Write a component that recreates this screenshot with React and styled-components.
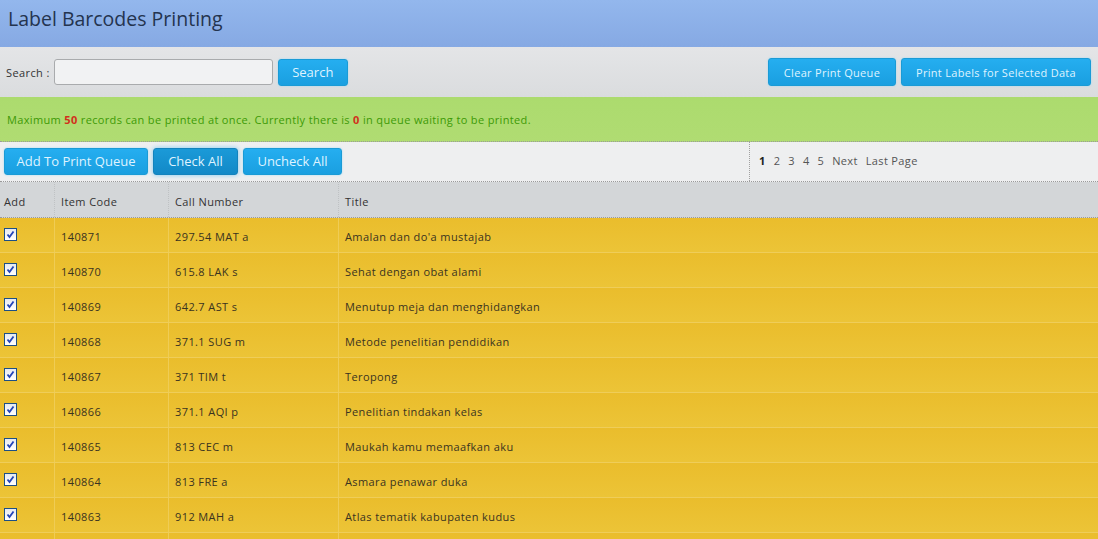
import React from "react";
import styled, { createGlobalStyle } from "styled-components";

const GlobalStyle = createGlobalStyle`
  body {
    margin: 0;
    background: #ebc02f;
    font-family: "Open Sans", "DejaVu Sans", sans-serif;
    overflow: hidden;
  }
`;

const Page = styled.div`
  width: 1098px;
  height: 539px;
  overflow: hidden;
`;

const Header = styled.div`
  height: 47px;
  background: linear-gradient(#93b7ed, #86a9e3);
  display: flex;
  align-items: center;
  padding-left: 8px;
  padding-bottom: 11px;
  box-sizing: border-box;
`;

const Title = styled.h1`
  margin: 0;
  font-size: 19.5px;
  font-weight: 400;
  color: #24344f;
`;

const SearchBar = styled.div`
  height: 50px;
  background: linear-gradient(#e4e5e7, #dadcde);
  display: flex;
  align-items: center;
  padding: 0 6px;
  box-sizing: border-box;
`;

const Label = styled.span`
  font-size: 11px;
  letter-spacing: 0.4px;
  color: #333;
  margin-right: 4px;
`;

const Input = styled.input`
  width: 219px;
  height: 26px;
  box-sizing: border-box;
  border: 1px solid #a9abad;
  border-radius: 3px;
  background: #f1f2f3;
`;

const Button = styled.button`
  height: ${(p) => p.h || 27}px;
  width: ${(p) => p.w}px;
  margin-left: ${(p) => p.ml || 0}px;
  border: 1px solid ${(p) => (p.active ? "#1383bd" : "#1a9bd6")};
  border-radius: 3px;
  background: ${(p) =>
    p.active
      ? "linear-gradient(#1b9ad8, #1289c7)"
      : "linear-gradient(#25aef0, #1a9fe0)"};
  box-shadow: ${(p) =>
    p.active ? "0 0 5px #7fc8f0" : "0 0 2px #9ad8f5"};
  color: #dff3ff;
  font-family: "Open Sans", sans-serif;
  font-size: ${(p) => p.fs || 13}px;
  letter-spacing: ${(p) => (p.fs ? 0.3 : 0)}px;
  padding: 0;
  cursor: pointer;
`;

const Right = styled.div`
  margin-left: auto;
  display: flex;
  gap: 5px;
  margin-right: 1px;
`;

const InfoBar = styled.div`
  height: 45px;
  background: linear-gradient(#acdb6e, #b0dc72);
  border-bottom: 1px dotted #9a9a9a;
  box-sizing: border-box;
  display: flex;
  align-items: center;
  padding: 1px 0 0 7px;
  font-size: 11px;
  letter-spacing: 0.35px;
  color: #3d9a06;
`;

const Num = styled.b`
  color: #d2301c;
`;

const Actions = styled.div`
  height: 40px;
  background: #eeeff0;
  display: flex;
  border-bottom: 1px dotted #9a9a9a;
  box-sizing: border-box;
`;

const ActionLeft = styled.div`
  width: 750px;
  display: flex;
  align-items: center;
  padding-left: 4px;
  padding-bottom: 1px;
  box-sizing: border-box;
  border-right: 1px dotted #a0a0a0;
`;

const Pager = styled.div`
  display: flex;
  gap: 8px;
  padding: 11px 0 0 9px;
  font-size: 11px;
  letter-spacing: 0.35px;
  color: #555;
`;

const PageLink = styled.span`
  font-weight: ${(p) => (p.current ? 700 : 400)};
  color: ${(p) => (p.current ? "#222" : "#555")};
`;

const cols = "54px 114px 170px 1fr";

const HeadRow = styled.div`
  display: grid;
  grid-template-columns: ${cols};
  height: 36px;
  background: #d3d6d8;
  border-bottom: 1px dotted #9a9a9a;
  box-sizing: border-box;
`;

const HeadCell = styled.div`
  display: flex;
  align-items: center;
  padding: 3px 0 0 ${(p) => (p.first ? 4 : 6)}px;
  font-size: 11px;
  letter-spacing: 0.4px;
  color: #333;
  border-left: ${(p) => (p.first ? "none" : "1px dotted #bfc2c4")};
  box-sizing: border-box;
`;

const Row = styled.div`
  display: grid;
  grid-template-columns: ${cols};
  height: 35px;
  background: linear-gradient(#eabd2c, #ecc437);
  border-bottom: 1px solid #efcd59;
  box-sizing: border-box;
`;

const Cell = styled.div`
  display: flex;
  align-items: ${(p) => (p.first ? "flex-start" : "center")};
  padding: ${(p) => (p.first ? "10px 0 0 4px" : "3px 0 0 6px")};
  font-size: 11px;
  letter-spacing: 0.4px;
  color: #3a3320;
  border-left: ${(p) => (p.first ? "none" : "1px solid #efcc55")};
  box-sizing: border-box;
`;

const Box = styled.span`
  width: 11px;
  height: 11px;
  border: 1px solid #1c4f86;
  background: linear-gradient(#e6e9ef, #ffffff);
  display: flex;
  align-items: center;
  justify-content: center;
`;

const Check = () => (
  <Box>
    <svg width="9" height="9" viewBox="0 0 9 9">
      <path d="M1.5 4.5 L3.5 7 L7.5 1.5" stroke="#2244b8" strokeWidth="1.8" fill="none" />
    </svg>
  </Box>
);

const rows = [
  ["140871", "297.54 MAT a", "Amalan dan do'a mustajab"],
  ["140870", "615.8 LAK s", "Sehat dengan obat alami"],
  ["140869", "642.7 AST s", "Menutup meja dan menghidangkan"],
  ["140868", "371.1 SUG m", "Metode penelitian pendidikan"],
  ["140867", "371 TIM t", "Teropong"],
  ["140866", "371.1 AQI p", "Penelitian tindakan kelas"],
  ["140865", "813 CEC m", "Maukah kamu memaafkan aku"],
  ["140864", "813 FRE a", "Asmara penawar duka"],
  ["140863", "912 MAH a", "Atlas tematik kabupaten kudus"],
];

export default function App() {
  return (
    <Page>
      <GlobalStyle />
      <Header>
        <Title>Label Barcodes Printing</Title>
      </Header>
      <SearchBar>
        <Label>Search :</Label>
        <Input />
        <Button w={70} ml={5}>Search</Button>
        <Right>
          <Button w={128} h={28} fs={11}>Clear Print Queue</Button>
          <Button w={190} h={28} fs={11}>Print Labels for Selected Data</Button>
        </Right>
      </SearchBar>
      <InfoBar>
        <span>
          Maximum <Num>50</Num> records can be printed at once. Currently there is <Num>0</Num> in queue waiting to be printed.
        </span>
      </InfoBar>
      <Actions>
        <ActionLeft>
          <Button w={144}>Add To Print Queue</Button>
          <Button w={85} ml={5} active>Check All</Button>
          <Button w={99} ml={5}>Uncheck All</Button>
        </ActionLeft>
        <Pager>
          <PageLink current>1</PageLink>
          <PageLink>2</PageLink>
          <PageLink>3</PageLink>
          <PageLink>4</PageLink>
          <PageLink>5</PageLink>
          <PageLink>Next</PageLink>
          <PageLink>Last Page</PageLink>
        </Pager>
      </Actions>
      <HeadRow>
        <HeadCell first>Add</HeadCell>
        <HeadCell>Item Code</HeadCell>
        <HeadCell>Call Number</HeadCell>
        <HeadCell>Title</HeadCell>
      </HeadRow>
      {rows.map(([code, call, title]) => (
        <Row key={code}>
          <Cell first><Check /></Cell>
          <Cell>{code}</Cell>
          <Cell>{call}</Cell>
          <Cell>{title}</Cell>
        </Row>
      ))}
      <Row>
        <Cell first />
        <Cell />
        <Cell />
        <Cell />
      </Row>
    </Page>
  );
}
